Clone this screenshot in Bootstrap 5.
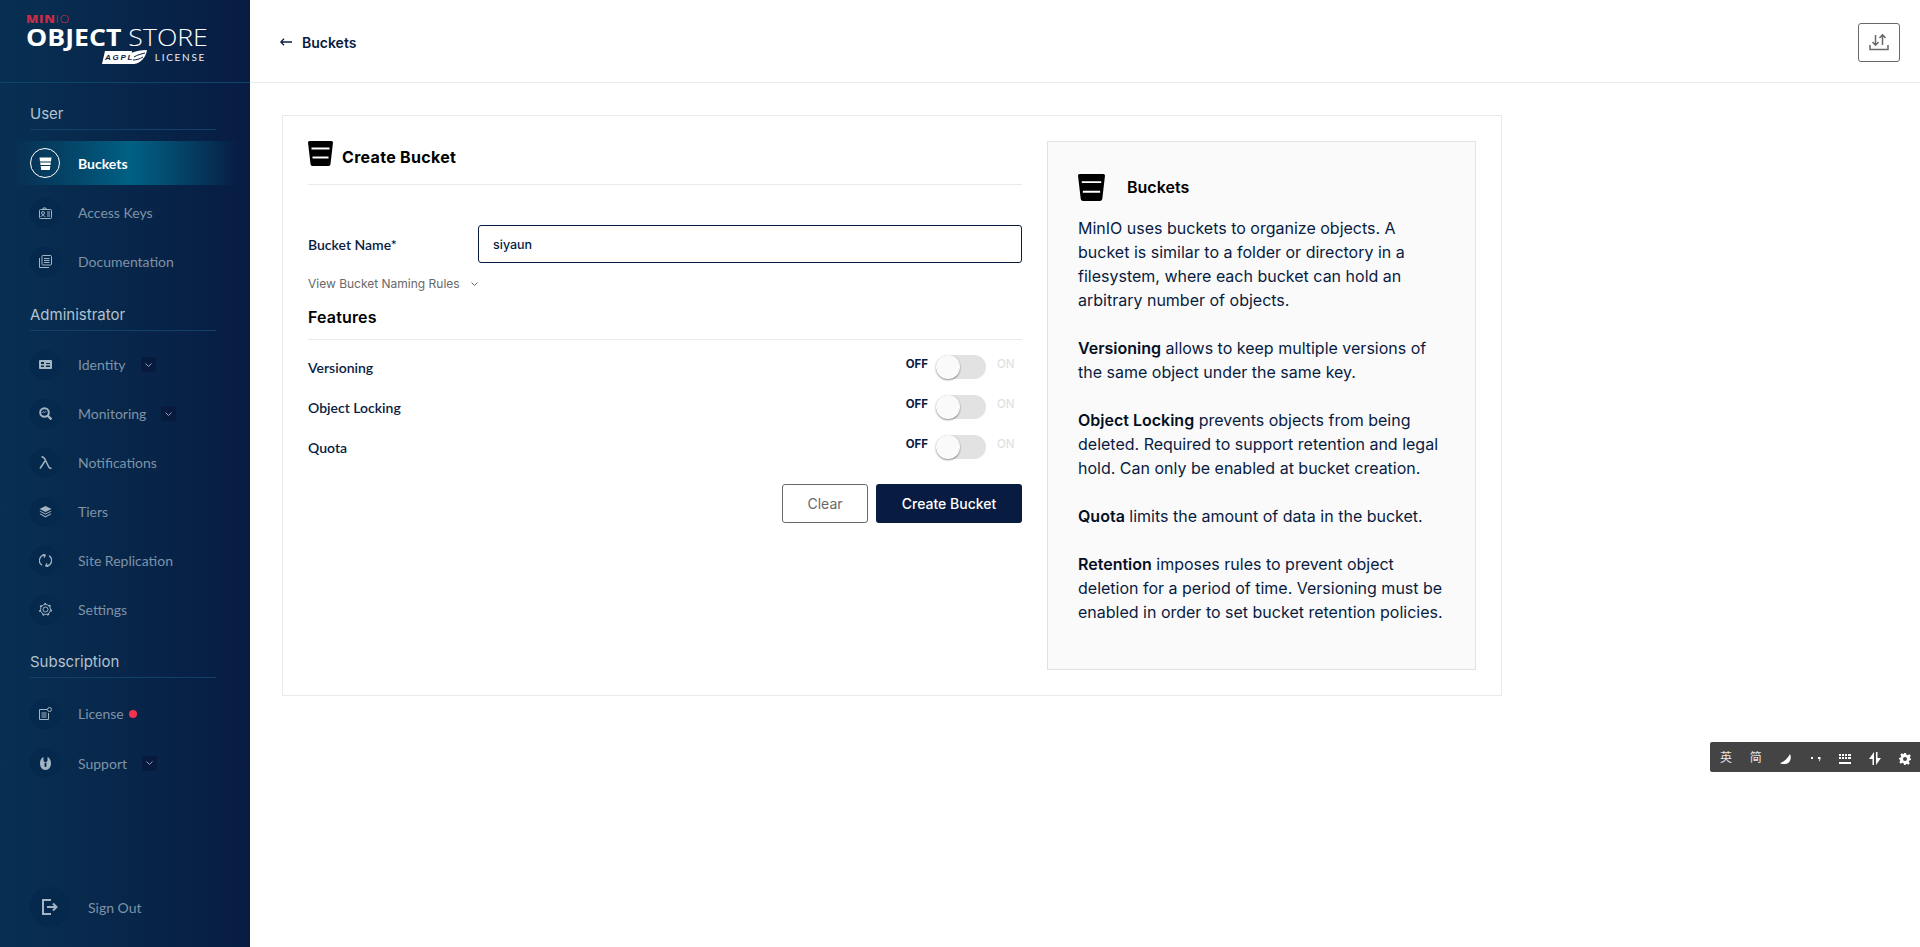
<!DOCTYPE html>
<html lang="en">
<head>
    <meta charset="UTF-8">
    <meta name="viewport" content="width=device-width, initial-scale=1.0">
    <title>Create Bucket</title>
    <link href="https://cdn.jsdelivr.net/npm/bootstrap@5.3.0/dist/css/bootstrap.min.css" rel="stylesheet">
    <style>
        html, body { height: 100%; overflow: hidden; }
        body { font-family: Inter, "Liberation Sans", sans-serif; color: #081c42; background: #fff; }
        .shell { height: 947px; }

        /* sidebar */
        .side { width: 250px; flex: none; height: 947px; background: linear-gradient(90deg, #073052, #081c42); font-family: Lato, "Liberation Sans", sans-serif; }
        .brand { height: 83px; border-bottom: 1px solid #0e4468; padding: 15px 0 0 26px; color: #fff; }
        .brand-top { font-family: "Open Sans", sans-serif; font-size: 10px; line-height: 8px; letter-spacing: .55px; color: #c72c48; font-weight: 800; transform: scaleX(1.28); transform-origin: left; }
        .brand-top span { font-weight: 300; }
        .brand-name { font-family: "Open Sans", sans-serif; font-size: 23px; line-height: 24px; margin-top: 2px; white-space: nowrap; transform: scaleX(1.16); transform-origin: left; }
        .brand-name b { font-weight: 700; }
        .brand-name span { font-weight: 300; }
        .brand-sub { width: 180px; font-size: 10px; line-height: 16px; letter-spacing: 1.7px; color: #e8edf2; }
        .sect-head { margin: 0 34px 0 30px; height: 26px; line-height: 20px; font-family: Inter, sans-serif; font-size: 15px; color: #b3c2cf; border-bottom: 1px solid #124069; }
        .sect-head.first { margin-top: 21px; }
        .sect-head.later { margin-top: 19px; }
        .sect-head.near { margin-top: 18px; }
        .sect-items { padding-top: 10px; }
        .sect-items.tight { padding-top: 9px; }
        .sect-items.loose { padding-top: 11px; }
        .nav-row { height: 49px; padding-left: 30px; font-size: 14px; color: #7e93a8; gap: 18px; }
        .nav-row.on { height: 44px; margin-bottom: 3px; margin-top: 1px; margin-right: 10px; color: #fff; font-weight: 700; background: linear-gradient(90deg, rgba(0,105,140,0) 12px, #006184 130px, rgba(0,97,132,0) 238px); }
        .nav-row.tall { height: 50px; }
        .nav-dot { width: 30px; height: 30px; flex: none; border-radius: 50%; background: #05284d; color: #a3b4c3; }
        .nav-row.on .nav-dot { background: transparent; border: 1px solid #fff; color: #fff; }
        .caret-box { width: 15px; height: 15px; margin-left: -3px; background: #081a3e; border-radius: 2px; color: #8fa3b5; }
        .red-dot { width: 8px; height: 8px; border-radius: 50%; background: #f4324f; margin-left: -13px; }
        .signout { margin-top: auto; padding: 0 0 20px 30px; gap: 18px; font-size: 14px; color: #7e93a8; }
        .signout .nav-dot { width: 40px; height: 40px; }

        /* page header */
        .top-bar { height: 83px; border-bottom: 1px solid #eaeaea; padding: 2px 20px 0 30px; }
        .back-link { gap: 10px; font-size: 14px; font-weight: 600; color: #081c42; }
        .up-btn { width: 42px; height: 39px; padding: 0; border: 1px solid #696969; border-radius: 3px; color: #696969; }

        /* form card */
        .form-box { width: 1220px; height: 581px; margin: 32px 0 0 32px; border: 1px solid #eaeaea; padding: 25px; gap: 25px; }
        .form-left { width: 714px; flex: none; }
        .form-title { height: 44px; gap: 9px; border-bottom: 1px solid #eaeaea; font-size: 16px; line-height: 20px; letter-spacing: .3px; font-weight: 700; color: #000; }
        .form-title span { margin-top: 6px; }
        .name-row { margin-top: 40px; }
        .name-label { width: 170px; flex: none; font-size: 14px; font-weight: 600; font-family: Lato, sans-serif; }
        .form-control.name-input { height: 38px; border: 1px solid #081c42; border-radius: 3px; font-size: 12.5px; font-weight: 500; color: #081c42; padding: 0 14px; box-shadow: none; }
        .rules-link { margin-top: 12px; font-size: 12px; line-height: 18px; color: #696969; gap: 11px; }
        .feat-title { margin-top: 13px; padding-bottom: 11px; font-size: 16px; line-height: 22px; letter-spacing: .15px; font-weight: 600; color: #000; border-bottom: 1px solid #eaeaea; }
        .feat-row { height: 24px; margin-top: 16px; font-size: 14px; font-weight: 600; font-family: Lato, sans-serif; }
        .feat-title + .feat-row { margin-top: 15px; }
        .off-txt { font-family: Inter, sans-serif; font-size: 11.5px; font-weight: 700; margin-right: 8px; margin-top: -4px; }
        .on-txt { width: 17px; font-family: Inter, sans-serif; font-size: 11.5px; font-weight: 500; white-space: nowrap; color: #e2e2e2; margin: -4px 8px 0 11px; }
        .sw-track { width: 50px; height: 24px; flex: none; border-radius: 12px; background: #e2e2e2; }
        .sw-knob { display: block; width: 24px; height: 24px; border-radius: 50%; background: #fafafa; box-shadow: 0 1px 2px rgba(0,0,0,.45); }
        .btn-row { margin-top: 25px; gap: 8px; }
        .btn.btn-clear { width: 86px; height: 39px; padding: 0; font-size: 14px; border: 1px solid #696969; border-radius: 3px; color: #696969; background: #fff; }
        .btn.btn-make { width: 146px; height: 39px; padding: 0; font-size: 14px; font-weight: 500; border: 0; border-radius: 3px; color: #fff; background: #081c42; }

        /* help panel */
        .help-box { width: 429px; flex: none; height: 529px; background: #fbfafa; border: 1px solid #e2e2e2; padding: 31px 27px 0 30px; color: #081c42; font-size: 16px; line-height: 24px; }
        .help-title { gap: 22px; color: #000; font-size: 16px; font-weight: 600; height: 29px; margin-bottom: 14px; }
        .help-title span { margin-top: -2px; }
        .help-box p { margin-bottom: 24px; }
        .help-box b { font-weight: 600; color: #040f24; }

        /* ime toolbar */
        .ime-bar { position: fixed; right: 0; top: 742px; width: 210px; height: 30px; padding-left: 1px; background: #444; color: #e6e6e6; border-radius: 2px 0 0 2px; font-family: "Noto Sans CJK SC", sans-serif; font-size: 12px; }
        .ime-bar span { width: 30px; text-align: center; }
    </style>
</head>
<body>
<div class="shell d-flex">
    <!-- Sidebar -->
    <aside class="side d-flex flex-column">
        <div class="brand">
            <div class="brand-top">MIN<span>IO</span></div>
            <div class="brand-name"><b>OBJECT</b> <span>STORE</span></div>
            <div class="brand-sub d-flex justify-content-end align-items-center">
                <svg width="46" height="15" viewBox="0 0 46 15"><path d="M4 1h27l-2 13H1z" fill="#fff"/><path d="M30 3c5-2 10-3 16-3-1 7-6 13-13 14H28z" fill="#fff"/><path d="M33 7c3-2 7-3 11-4M32 10c3 0 7-1 10-3" stroke="#081c42" fill="none"/><text x="4" y="10" font-family="Liberation Sans" font-style="italic" font-weight="700" font-size="8" fill="#081c42">AGPL</text></svg>
                <span class="ms-2">LICENSE</span>
            </div>
        </div>

        <div class="sect-head first">User</div>
        <div class="sect-items">
            <div class="nav-row on d-flex align-items-center">
                <span class="nav-dot d-flex align-items-center justify-content-center"><svg width="13" height="13" viewBox="0 0 13 13"><path d="M.5 .5h12l-.5 4H1zM1.200 5.500h10.600l-.3 2.500H1.500zM1.700 9h9.600l-.5 4H2.200z" fill="currentColor"/></svg></span>Buckets
            </div>
            <div class="nav-row d-flex align-items-center">
                <span class="nav-dot d-flex align-items-center justify-content-center"><svg width="13" height="12" viewBox="0 0 13 12" fill="none" stroke="currentColor"><rect x=".5" y="2.500" width="12" height="9" rx="1"/><circle cx="4" cy="6" r="1.500"/><path d="M2 10c0-2 4-2 4 0M8 5h3M8 7h3M8 9h3M4 2.500V1h3v1.500"/></svg></span>Access Keys
            </div>
            <div class="nav-row d-flex align-items-center">
                <span class="nav-dot d-flex align-items-center justify-content-center"><svg width="13" height="13" viewBox="0 0 13 13" fill="none" stroke="currentColor"><rect x="3" y=".5" width="9.500" height="9.500" rx="1"/><path d="M.5 3v9.500H10M5 3.500h5.500M5 5.500h5.500M5 7.500h5.500"/></svg></span>Documentation
            </div>
        </div>

        <div class="sect-head later">Administrator</div>
        <div class="sect-items tight">
            <div class="nav-row d-flex align-items-center">
                <span class="nav-dot d-flex align-items-center justify-content-center"><svg width="13" height="11" viewBox="0 0 13 11"><path fill-rule="evenodd" d="M1 1h11a1 1 0 0 1 1 1v7a1 1 0 0 1-1 1H1a1 1 0 0 1-1-1V2a1 1 0 0 1 1-1zM2 3v2h3V3zM2 6.500V8h3V6.500zM7 4v1h4V4zM7 6.500V8h4V6.500z" fill="currentColor"/></svg></span>Identity
                <span class="caret-box d-flex align-items-center justify-content-center"><svg width="7" height="4" viewBox="0 0 7 4" fill="none" stroke="currentColor"><path d="M.5.500l3 3 3-3"/></svg></span>
            </div>
            <div class="nav-row d-flex align-items-center">
                <span class="nav-dot d-flex align-items-center justify-content-center"><svg width="13" height="13" viewBox="0 0 13 13" fill="none" stroke="currentColor" stroke-width="2"><circle cx="5.500" cy="5.500" r="4.300"/><path d="M8.500 8.500l4 4" stroke-width="2.400"/><path d="M3.300 6l1.500-1.500 1 1 1.200-1.200" stroke-width="1"/></svg></span>Monitoring
                <span class="caret-box d-flex align-items-center justify-content-center"><svg width="7" height="4" viewBox="0 0 7 4" fill="none" stroke="currentColor"><path d="M.5.500l3 3 3-3"/></svg></span>
            </div>
            <div class="nav-row d-flex align-items-center">
                <span class="nav-dot d-flex align-items-center justify-content-center"><svg width="13" height="13" viewBox="0 0 13 13" fill="none" stroke="currentColor" stroke-width="1.500"><path d="M1 12.500L6 5M2.500 .8c2.500 0 3 1 4 3.500L9.500 10.500c.5 1.300 1.500 2 3 1.800"/></svg></span>Notifications
            </div>
            <div class="nav-row d-flex align-items-center">
                <span class="nav-dot d-flex align-items-center justify-content-center"><svg width="13" height="12" viewBox="0 0 13 12" fill="currentColor"><path d="M6.500 0l6 3-6 3-6-3z"/><path d="M1.500 5L.5 5.500l6 3 6-3-1-.5-5 2.500z"/><path d="M1.500 7.500l-1 .5 6 3.500 6-3.500-1-.5-5 2.700z"/></svg></span>Tiers
            </div>
            <div class="nav-row d-flex align-items-center">
                <span class="nav-dot d-flex align-items-center justify-content-center"><svg width="13" height="13" viewBox="0 0 13 13" fill="none" stroke="currentColor" stroke-width="1.300"><path d="M3 11.200A5.400 5.400 0 0 1 6 1.200M10 1.800A5.400 5.400 0 0 1 7 11.800"/><path d="M3.700 .4L6.200 1.200 5 3.600M9.300 12.600L6.800 11.800 8 9.400"/></svg></span>Site Replication
            </div>
            <div class="nav-row d-flex align-items-center">
                <span class="nav-dot d-flex align-items-center justify-content-center"><svg width="13" height="13" viewBox="0 0 13 13" fill="none" stroke="currentColor"><circle cx="6.500" cy="6.500" r="2.500"/><circle cx="6.500" cy="6.500" r="5"/><circle cx="6.500" cy="6.500" r="5.800" stroke-width="1.400" stroke-dasharray="2 3.070"/></svg></span>Settings
            </div>
        </div>

        <div class="sect-head near">Subscription</div>
        <div class="sect-items loose">
            <div class="nav-row d-flex align-items-center">
                <span class="nav-dot d-flex align-items-center justify-content-center"><svg width="13" height="13" viewBox="0 0 13 13" fill="none" stroke="currentColor"><path d="M8 2.500H.5v10h9V6M2.500 6h5M2.500 8h5M2.500 10h5"/><circle cx="10.500" cy="2.500" r="2"/></svg></span>License
                <span class="red-dot"></span>
            </div>
            <div class="nav-row tall d-flex align-items-center">
                <span class="nav-dot d-flex align-items-center justify-content-center"><svg width="11" height="13" viewBox="0 0 11 13"><path fill-rule="evenodd" d="M3.500 0v3.500c0 .8.700 1.500 2 1.500s2-.7 2-1.500V0c2 .7 3.500 3 3.500 6 0 4-2 7-5.500 7S0 10 0 6c0-3 1.500-5.300 3.500-6zM4.500 6.500v2.500c0 1.300 2 1.300 2 0V6.500c0-1.300-2-1.300-2 0z" fill="currentColor"/></svg></span>Support
                <span class="caret-box d-flex align-items-center justify-content-center"><svg width="7" height="4" viewBox="0 0 7 4" fill="none" stroke="currentColor"><path d="M.5.500l3 3 3-3"/></svg></span>
            </div>
        </div>

        <div class="signout d-flex align-items-center">
            <span class="nav-dot d-flex align-items-center justify-content-center"><svg width="16" height="16" viewBox="0 0 16 16" fill="none" stroke="currentColor" stroke-width="2"><path d="M9 1H1v14h8M5 8h9M11 4.500L14.500 8 11 11.500"/></svg></span>Sign Out
        </div>
    </aside>

    <!-- Main -->
    <main class="flex-grow-1">
        <div class="top-bar d-flex align-items-center justify-content-between">
            <div class="back-link d-flex align-items-center">
                <svg width="12" height="8" viewBox="0 0 12 8" fill="none" stroke="#081c42" stroke-width="1.300"><path d="M12 4H1M4 .7L.8 4 4 7.300"/></svg>
                Buckets
            </div>
            <button class="btn up-btn d-flex align-items-center justify-content-center">
                <svg width="20" height="17" viewBox="0 0 20 17" fill="none" stroke="currentColor" stroke-width="1.500"><path d="M1 11v4.500h18V11M6.500 1v10M3.500 8l3 3.200 3-3.200M13.500 11V1M10.500 4l3-3.200 3 3.200"/></svg>
            </button>
        </div>

        <div class="form-box d-flex">
            <div class="form-left">
                <div class="form-title d-flex align-items-start">
                    <svg width="25" height="25" viewBox="0 0 25 25"><path d="M1.500 0h22a1.500 1.500 0 0 1 1.500 1.500l-2.500 21.500a2 2 0 0 1-2 2h-16a2 2 0 0 1-2-2L0 1.500A1.500 1.500 0 0 1 1.500 0z" fill="#000"/><path d="M3.500 7.500h18M4.500 16.500h16" stroke="#fff" stroke-width="2"/></svg>
                    <span>Create Bucket</span>
                </div>
                <div class="name-row d-flex align-items-center">
                    <label class="name-label" for="bucket">Bucket Name*</label>
                    <input id="bucket" class="form-control name-input" type="text" value="siyaun">
                </div>
                <div class="rules-link d-flex align-items-center">
                    View Bucket Naming Rules
                    <svg width="7" height="4" viewBox="0 0 7 4" fill="none" stroke="#696969"><path d="M.5.500l3 3 3-3"/></svg>
                </div>
                <div class="feat-title">Features</div>
                <div class="feat-row d-flex align-items-center">
                    <span class="me-auto">Versioning</span>
                    <span class="off-txt">OFF</span><span class="sw-track"><span class="sw-knob"></span></span><span class="on-txt">ON</span>
                </div>
                <div class="feat-row d-flex align-items-center">
                    <span class="me-auto">Object Locking</span>
                    <span class="off-txt">OFF</span><span class="sw-track"><span class="sw-knob"></span></span><span class="on-txt">ON</span>
                </div>
                <div class="feat-row d-flex align-items-center">
                    <span class="me-auto">Quota</span>
                    <span class="off-txt">OFF</span><span class="sw-track"><span class="sw-knob"></span></span><span class="on-txt">ON</span>
                </div>
                <div class="btn-row d-flex justify-content-end">
                    <button class="btn btn-clear">Clear</button>
                    <button class="btn btn-make">Create Bucket</button>
                </div>
            </div>

            <div class="help-box">
                <div class="help-title d-flex align-items-center">
                    <svg width="27" height="27" viewBox="0 0 25 25"><path d="M1.500 0h22a1.500 1.500 0 0 1 1.500 1.500l-2.500 21.500a2 2 0 0 1-2 2h-16a2 2 0 0 1-2-2L0 1.500A1.500 1.500 0 0 1 1.500 0z" fill="#000"/><path d="M3.500 7.500h18M4.500 16.500h16" stroke="#fff" stroke-width="1.800"/></svg>
                    <span>Buckets</span>
                </div>
                <p>MinIO uses buckets to organize objects. A bucket is similar to a folder or directory in a filesystem, where each bucket can hold an arbitrary number of objects.</p>
                <p><b>Versioning</b> allows to keep multiple versions of the same object under the same key.</p>
                <p><b>Object Locking</b> prevents objects from being deleted. Required to support retention and legal hold. Can only be enabled at bucket creation.</p>
                <p><b>Quota</b> limits the amount of data in the bucket.</p>
                <p><b>Retention</b> imposes rules to prevent object deletion for a period of time. Versioning must be enabled in order to set bucket retention policies.</p>
            </div>
        </div>
    </main>
</div>

<!-- IME toolbar -->
<div class="ime-bar d-flex align-items-center">
    <span>英</span>
    <span>简</span>
    <span><svg width="12" height="10" viewBox="0 0 12 10" fill="#fff"><path d="M0 9C4 8 8 4 10 0c2 4 0 10-5 10-2 0-4 0-5-1z"/></svg></span>
    <span><svg width="10" height="6" viewBox="0 0 10 6" fill="#fff"><rect y="1" width="2" height="2"/><path d="M7 1h2.500v2L8.500 5.500 8 5l.5-2H7z"/></svg></span>
    <span><svg width="12" height="10" viewBox="0 0 12 10" fill="#fff"><path d="M0 0h2v2H0zM3 0h2v2H3zM6 0h2v2H6zM9 0h3v2H9zM0 3h2v2H0zM3 3h2v2H3zM6 3h2v2H6zM9 3h3v2H9zM0 8h12v2H0z"/></svg></span>
    <span><svg width="12" height="13" viewBox="0 0 12 13" fill="#fff"><path d="M5 0v13H3.500V7H0zM7 0h1.500v6H12l-5 7z"/></svg></span>
    <span><svg width="12" height="12" viewBox="0 0 24 24" fill="#fff"><path fill-rule="evenodd" d="M10 0h4l1 3.500 2.500 1 3.200-1.800 2.800 2.800-1.800 3.200 1 2.500L24 12v2l-3.300.8-1 2.500 1.800 3.200-2.800 2.800-3.200-1.800-2.500 1L14 24h-4l-.8-3.500-2.500-1-3.200 1.800L.7 18.500l1.800-3.200-1-2.500L0 12v-2l3.500-.8 1-2.500L2.700 3.500 5.500.7l3.200 1.800 1-.8zM12 8a4 4 0 1 0 0 8 4 4 0 0 0 0-8z"/></svg></span>
</div>

<script src="https://cdn.jsdelivr.net/npm/bootstrap@5.3.0/dist/js/bootstrap.bundle.min.js"></script>
</body>
</html>
